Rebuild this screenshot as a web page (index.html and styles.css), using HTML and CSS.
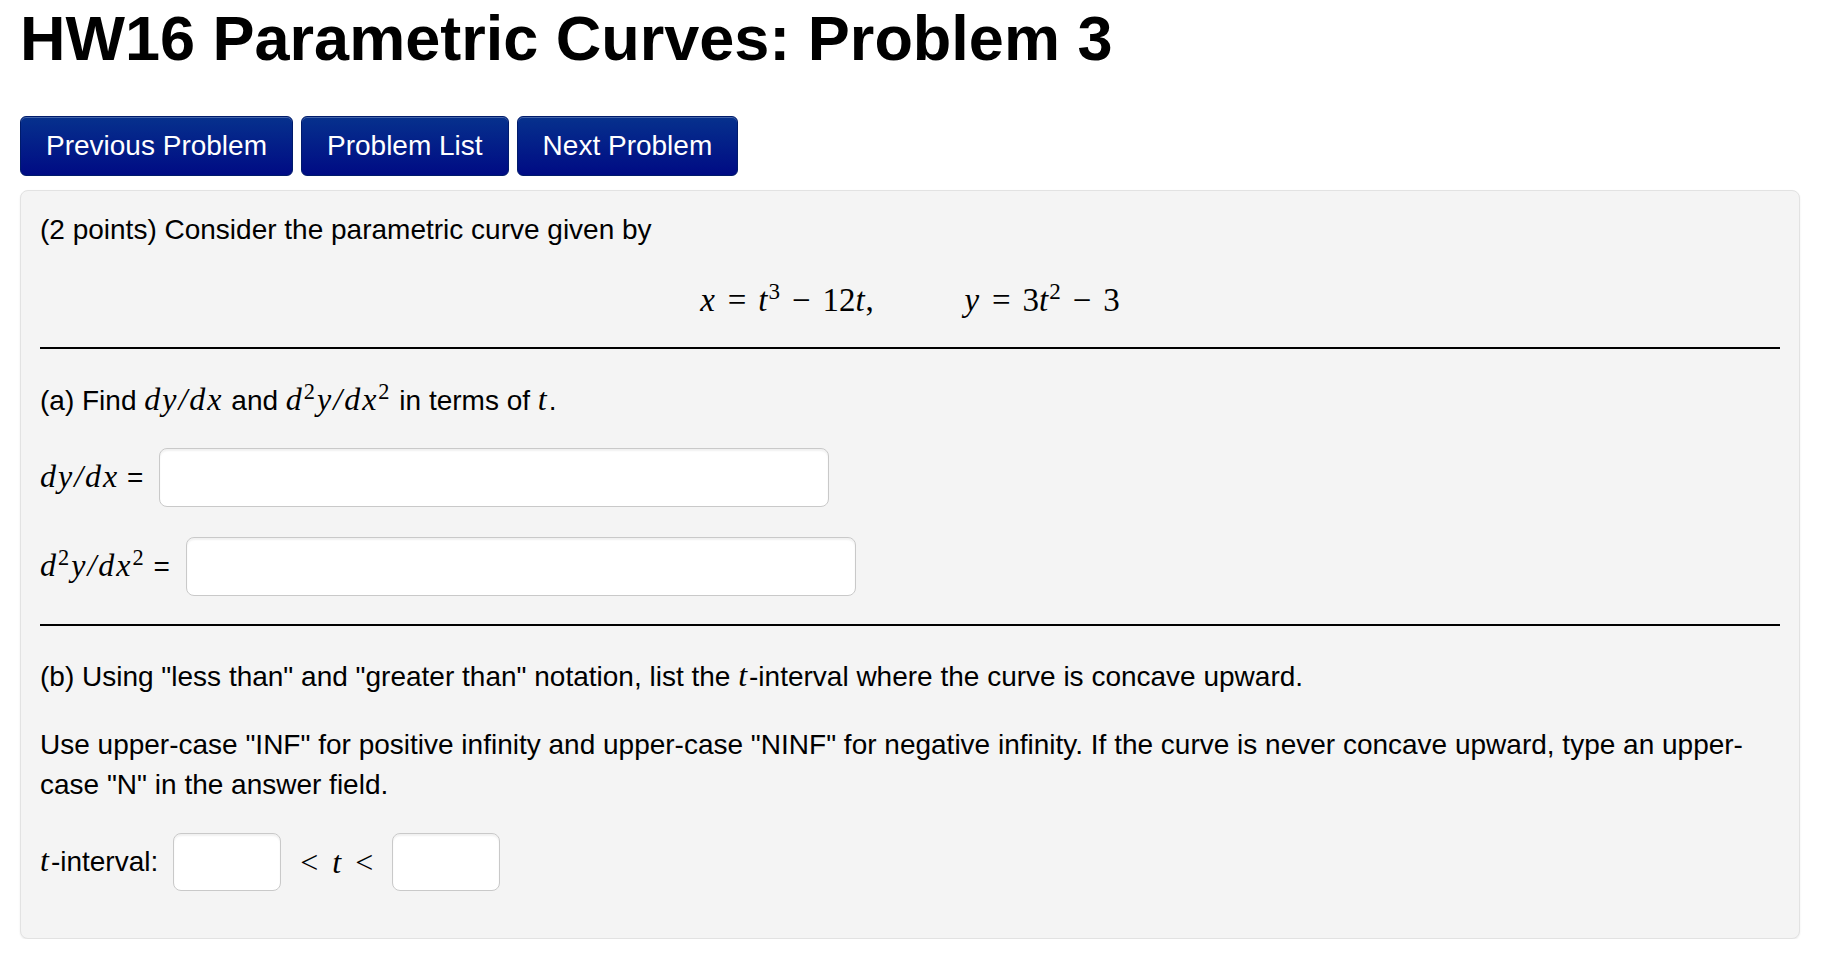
FILE: index.html
```html
<!DOCTYPE html>
<html lang="en">
<head>
  <meta charset="UTF-8" />
  <meta name="viewport" content="width=device-width, initial-scale=1.0" />
  <title>HW16 Parametric Curves: Problem 3</title>
  <link rel="stylesheet" href="styles.css">
</head>
<body>
  <div class="page">
    <h1 class="problem-title">HW16 Parametric Curves: Problem 3</h1>

    <div class="nav-buttons">
      <a class="nav-btn" href="#">Previous Problem</a>
      <a class="nav-btn" href="#">Problem List</a>
      <a class="nav-btn" href="#">Next Problem</a>
    </div>

    <div class="problem-body">
      <p class="intro">(2 points) Consider the parametric curve given by</p>

      <div class="display-math">
        <span class="eq"><i>x</i><span class="op">=</span><i>t</i><sup>3</sup><span class="op">&minus;</span>12<i>t</i>,</span>
        <span class="eq eq-y"><i>y</i><span class="op">=</span>3<i>t</i><sup>2</sup><span class="op">&minus;</span>3</span>
      </div>

      <hr class="divider divider-a">

      <p class="part-a">(a) Find <span class="m">dy/dx</span> and <span class="m">d<sup>2</sup>y/dx<sup>2</sup></span> in terms of <span class="m">t</span>.</p>

      <div class="answer-row row-first">
        <label class="answer-label"><span class="m">dy/dx</span> =</label>
        <input type="text" class="answer answer-wide">
      </div>
      <div class="answer-row row-second">
        <label class="answer-label"><span class="m">d<sup>2</sup>y/dx<sup>2</sup></span> =</label>
        <input type="text" class="answer answer-wide">
      </div>

      <hr class="divider divider-b">

      <p class="part-b">(b) Using "less than" and "greater than" notation, list the <span class="m">t</span>-interval where the curve is concave upward.</p>

      <p class="note">Use upper-case "INF" for positive infinity and upper-case "NINF" for negative infinity. If the curve is never concave upward, type an upper-case "N" in the answer field.</p>

      <div class="answer-row row-interval">
        <label class="answer-label"><span class="m">t</span>-interval:</label>
        <input type="text" class="answer answer-small">
        <span class="lt-t">&lt;<i>t</i>&lt;</span>
        <input type="text" class="answer answer-small">
      </div>
    </div>
  </div>
</body>
</html>
```

FILE: styles.css
```css
body {
  margin: 0;
  font-family: "Liberation Sans", Arial, Helvetica, sans-serif;
  font-size: 28px;
  line-height: 40px;
  color: #000;
  background: #fff;
}
.page {
  padding: 0 40px 0 20px;
}
.problem-title {
  margin: 3px 0 0;
  font-size: 63px;
  line-height: 70px;
  font-weight: bold;
}
.nav-buttons {
  display: flex;
  gap: 8px;
  margin-top: 43px;
}
.nav-btn {
  display: block;
  height: 58px;
  line-height: 58px;
  padding: 0 25px;
  border: 1px solid #001b6b;
  border-radius: 6px;
  background: linear-gradient(#06318d, #000b84);
  box-shadow: inset 0 1px 0 rgba(255, 255, 255, 0.25);
  color: #fff;
  text-decoration: none;
}
/* problem well */
.problem-body {
  margin-top: 14px;
  padding: 19px 19px 47px;
  background: #f4f4f4;
  border: 1px solid #e2e2e2;
  border-radius: 8px;
  box-shadow: 0 1px 2px rgba(0, 0, 0, 0.08);
}
.problem-body p {
  margin: 0;
}
.m,
.display-math,
.lt-t {
  font-family: "Liberation Serif", "Times New Roman", serif;
}
.m {
  font-size: 32px;
  line-height: 24px;
  font-style: italic;
  letter-spacing: 2px;
}
.m sup,
.display-math sup {
  font-size: 0.7em;
  line-height: 0;
  vertical-align: 0.5em;
  font-style: normal;
}
.display-math {
  margin-top: 30px;
  height: 40px;
  font-size: 33px;
  text-align: center;
}
.display-math i {
  letter-spacing: 1px;
}
.op {
  margin: 0 0.36em;
}
.eq-y {
  margin-left: 2.5em;
}
.divider {
  margin: 0;
  border: 0;
  border-top: 2px solid #000;
}
.divider-a {
  margin-top: 27px;
}
.part-a {
  margin-top: 32px !important;
}
.answer-row {
  display: flex;
  align-items: center;
}
.row-first {
  margin-top: 27px;
}
.row-second {
  margin-top: 30px;
}
.answer {
  box-sizing: border-box;
  height: 59px;
  margin-left: 16px;
  background: #fff;
  border: 1px solid #c9c9c9;
  border-radius: 8px;
  box-shadow: inset 0 2px 2px rgba(0, 0, 0, 0.06);
  font: inherit;
}
.answer-wide {
  width: 670px;
}
.answer-small {
  width: 108px;
  height: 58px;
}
.divider-b {
  margin-top: 28px;
}
.part-b {
  margin-top: 31px !important;
}
.note {
  margin-top: 28px !important;
}
.row-interval {
  margin-top: 28px;
}
.row-interval .answer-small {
  margin-left: 15px;
}
.lt-t {
  margin: 0 4px 0 19px;
  font-size: 32px;
  line-height: 24px;
}
.lt-t i {
  margin: 0 14px;
}
```
